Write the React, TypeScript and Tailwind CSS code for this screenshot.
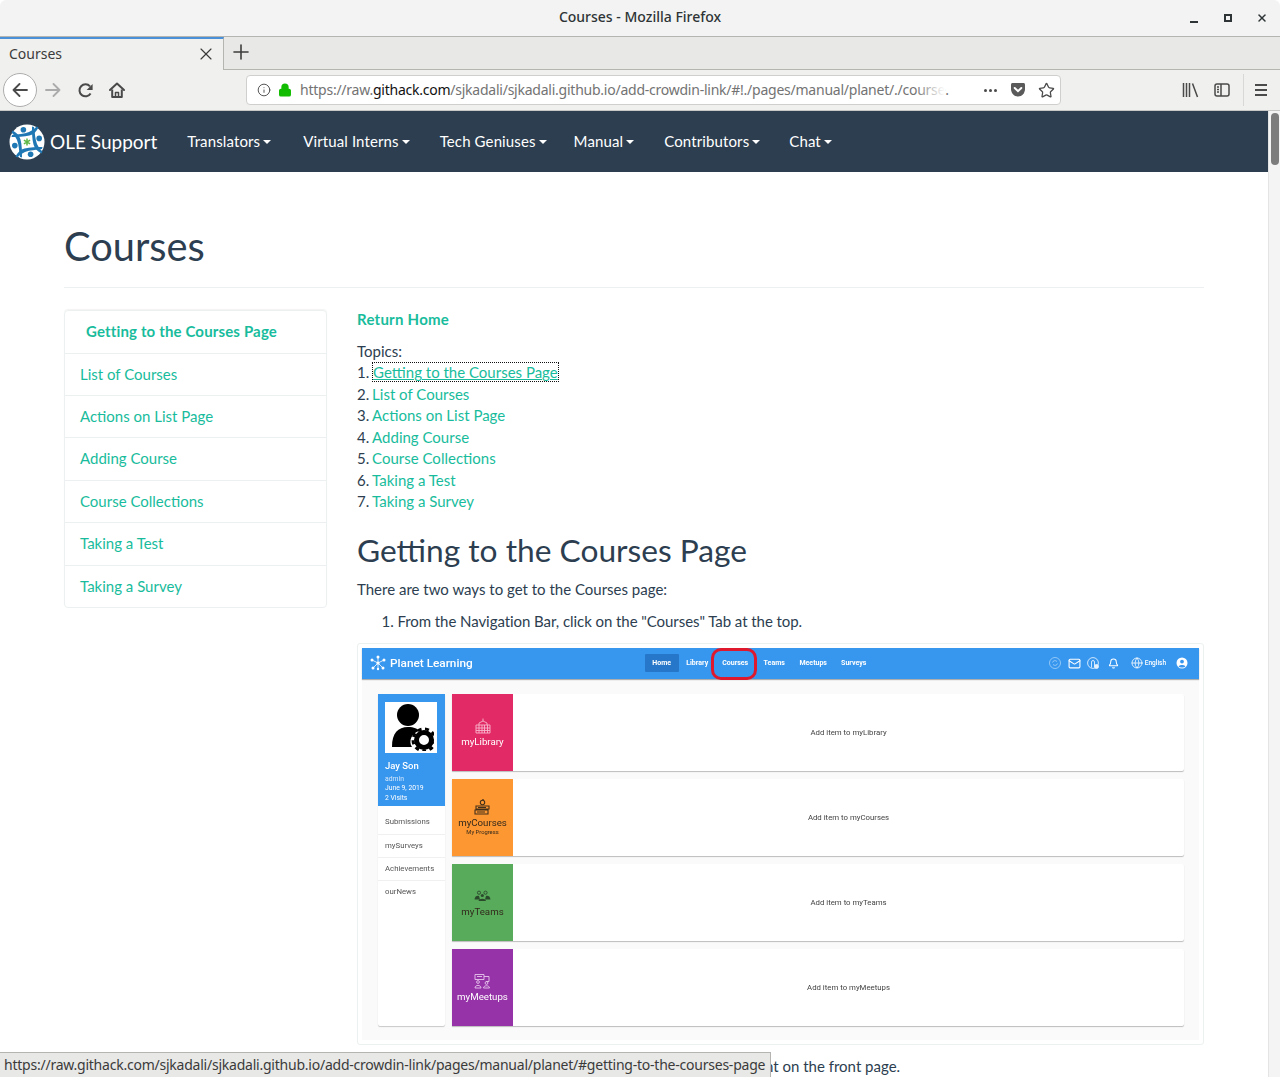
import React from 'react';
import { Info, Lock, Star, X, Plus, Bell, Mail, Globe } from 'lucide-react';

const topics = [
  'Getting to the Courses Page',
  'List of Courses',
  'Actions on List Page',
  'Adding Course',
  'Course Collections',
  'Taking a Test',
  'Taking a Survey',
];

const navItems = [
  { label: 'Translators', gap: 'ml-0' },
  { label: 'Virtual Interns', gap: 'ml-[32px]' },
  { label: 'Tech Geniuses', gap: 'ml-[30px]' },
  { label: 'Manual', gap: 'ml-[27px]' },
  { label: 'Contributors', gap: 'ml-[30px]' },
  { label: 'Chat', gap: 'ml-[29px]' },
];

const OleLogo = () => (
  <svg width="36" height="36" viewBox="-18 -18 36 36">
    <circle r="17.5" fill="#fff" />
    {[0, 90, 180, 270].map((deg) => (
      <g key={deg} transform={`rotate(${deg})`} fill="#1f78b4">
        <circle cx="-3.6" cy="-12.2" r="2.8" />
        <path d="M-15 -7 C-9 -8 -3 -8 2 -10 C5 -11.5 8 -13.5 9.5 -15.5 L11.5 -14.5 C9.5 -10.5 6.5 -7.5 2.5 -6.5 C-3 -5 -10 -5 -15.5 -5Z" />
      </g>
    ))}
    <path d="M0 -3.6V3.6M-3.1 -1.8L3.1 1.8M3.1 -1.8L-3.1 1.8" stroke="#5fb846" strokeWidth="1.5" />
  </svg>
);

const Caret = () => (
  <span className="ml-[3px] inline-block border-x-[4px] border-t-[4px] border-x-transparent border-t-white align-middle" />
);

const LibraryGlyph = () => (
  <svg width="18" height="16" viewBox="0 0 18 16" fill="none" stroke="#f7b5cc" strokeWidth="0.9">
    <path d="M9 0.5V3M5 5L9 3L13 5M2 7H16V15H2ZM5 5V7M13 5V7M2 10H16M2 12.5H16M5 7V15M8 7V15M10.5 7V15M13.5 7V15" />
  </svg>
);

const CoursesGlyph = () => (
  <svg width="17" height="16" viewBox="0 0 17 16" fill="none" stroke="#43301a" strokeWidth="1.1">
    <circle cx="8.5" cy="3.5" r="2.2" />
    <path d="M8.5 1.2L9.5 0M2 7H15V10H2ZM1 11H14V15H1ZM4 8.5H12M3 13H11" />
  </svg>
);

const TeamsGlyph = () => (
  <svg width="17" height="16" viewBox="0 0 17 11" fill="#2b4a2c">
    <circle cx="5" cy="2.2" r="1.6" fill="none" stroke="#2b4a2c" strokeWidth="0.9" />
    <circle cx="11.5" cy="2.2" r="1.6" fill="none" stroke="#2b4a2c" strokeWidth="0.9" />
    <circle cx="8.3" cy="5" r="1.6" />
    <path d="M0.5 9 C1 5.5 3 5 5 5.5 L6 9Z M16.5 9 C16 5.5 14 5 12 5.5 L11 9Z M4.5 10.5 C5 7.5 11.5 7.5 12 10.5Z" />
  </svg>
);

const MeetupsGlyph = () => (
  <svg width="17" height="16" viewBox="0 0 17 15" fill="none" stroke="#e6c6ec" strokeWidth="0.9">
    <path d="M1 1H10V6H1ZM3 3H8M10 3H15V8H12" />
    <circle cx="4" cy="8.5" r="1.4" />
    <circle cx="12.5" cy="9.5" r="1.4" />
    <path d="M1 14.5 C1 11 7 11 7 14.5ZM9.5 14.5 C9.5 11.5 15.5 11.5 15.5 14.5Z" />
  </svg>
);

const HomeTile = ({ label, sub, bg, dark, icon, note }: { label: string; sub?: string; bg: string; dark?: boolean; icon: React.ReactNode; note: string }) => (
  <div className="flex h-[77px] rounded-r-[2px] bg-white shadow-[0_1px_1px_rgba(0,0,0,0.25)]">
    <div className={`flex w-[61px] shrink-0 flex-col items-center justify-center pt-[1px] ${bg} ${dark ? 'text-[#33291c]' : 'text-white'}`}>
      <div className="mb-[2px] h-[16px]">{icon}</div>
      <div className="text-[9.7px] leading-[12px]">{label}</div>
      {sub && <div className="text-[5.8px] leading-[7px]">{sub}</div>}
    </div>
    <div className="flex flex-1 items-center justify-center pt-[2px] text-[7.8px] text-[#444]">{note}</div>
  </div>
);

const PlanetShot = () => (
  <div className="mb-[10px] rounded-[3px] border border-[#ecf0f1] p-[4px]">
    <div className="relative h-[392px] bg-[#fafafa] font-['Roboto',sans-serif] blur-[0.3px]">
      <div className="flex h-[31px] items-center bg-[#3796ee] text-white shadow-[0_1px_1px_rgba(0,0,0,0.3)]">
        <svg width="18" height="16" viewBox="0 0 18 16" className="ml-[7px]" fill="#fff">
          <path d="M9 8L9 2M9 8L3 5M9 8L15 5M9 8L4 13M9 8L14 13M9 8V14" stroke="#fff" strokeWidth="0.8" />
          <circle cx="9" cy="2" r="1.5" /><circle cx="3" cy="5" r="1.5" /><circle cx="15" cy="5" r="1.5" />
          <circle cx="4" cy="13" r="1.5" /><circle cx="14" cy="13" r="1.5" /><circle cx="9" cy="8" r="1.6" /><circle cx="9" cy="14" r="1.2" />
        </svg>
        <span className="ml-[3px] mt-[1px] text-[11.8px] font-medium leading-none">Planet Learning</span>
        <div className="ml-[172px] flex items-center text-[7px] font-bold">
          <span className="flex h-[18px] w-[34px] items-center justify-center rounded-[1px] bg-[#2677c9] pt-[1px]">Home</span>
          <span className="ml-[7px] mt-[1px] w-[23px] text-center">Library</span>
          <span className="ml-[13.5px] mt-[1px] w-[26px] text-center">Courses</span>
          <span className="ml-[15px] mt-[1px] w-[22px] text-center">Teams</span>
          <span className="ml-[14px] mt-[1px] w-[28px] text-center">Meetups</span>
          <span className="ml-[13.5px] mt-[1px] w-[26px] text-center">Surveys</span>
        </div>
        <div className="ml-auto mr-[11px] flex items-center">
          <svg width="12" height="12" viewBox="0 0 12 12" fill="none" stroke="#a9d3f8" strokeWidth="0.8">
            <circle cx="6" cy="6" r="5.5" />
            <path d="M3.5 5.5C4 3.5 6.5 3 8 4.5M8.5 6.5C8 8.5 5.5 9 4 7.5" />
          </svg>
          <Mail size={13} strokeWidth={2} className="ml-[7px]" />
          <svg width="12" height="12" viewBox="0 0 12 12" fill="none" stroke="#e3f0fd" strokeWidth="0.9" className="ml-[6px]">
            <circle cx="6" cy="6" r="5.4" />
            <path d="M4.5 10.5V5a1.5 1.5 0 0 1 3 0v5" />
            <circle cx="9.5" cy="9.5" r="2" fill="#e3f0fd" />
          </svg>
          <Bell size={11} strokeWidth={2.2} className="ml-[9px]" />
          <Globe size={12} strokeWidth={1.6} className="ml-[12px]" />
          <span className="ml-[2px] mt-[1px] text-[6.5px] font-medium">English</span>
          <svg width="12" height="12" viewBox="0 0 12 12" className="ml-[10px]">
            <circle cx="6" cy="6" r="5.5" fill="#fff" />
            <circle cx="6" cy="4.6" r="1.9" fill="#3796ee" />
            <path d="M2.6 9.4C3.4 7.4 8.6 7.4 9.4 9.4C8 10.8 4 10.8 2.6 9.4Z" fill="#3796ee" />
          </svg>
        </div>
      </div>
      {/* red marker drawn over the screenshot's Courses tab */}
      <div className="absolute left-[349px] top-0 h-[32px] w-[46px] rounded-[10px] border-[3px] border-[#e0182d]" />
      <div className="flex gap-[7px] pl-[16px] pr-[15px] pt-[15px]">
        <div className="h-[332px] w-[67px] shrink-0 rounded-b-[2px] bg-white shadow-[0_1px_1px_rgba(0,0,0,0.2)]">
          <div className="h-[112px] bg-[#3796ee] px-[7px] pt-[8px] text-white">
            <div className="flex h-[51px] w-[52px] items-center justify-center bg-white">
              <svg width="46" height="48" viewBox="0 0 46 48" fill="#000">
                <circle cx="20" cy="12" r="11" />
                <path d="M4 44 C4 30 10 24 20 24 C26 24 30 26 31 28 C24 30 20 38 24 44Z" />
                <circle cx="36" cy="37" r="7.5" fill="none" stroke="#000" strokeWidth="5" />
                <circle cx="36" cy="37" r="11" fill="none" stroke="#000" strokeWidth="3" strokeDasharray="4 3.5" />
              </svg>
            </div>
            <div className="mt-[7px] text-[9.5px] font-medium leading-[11px]">Jay Son</div>
            <div className="mt-[4px] text-[6.8px] leading-[9.5px] text-[#d5e8fb]">admin</div>
            <div className="text-[6.8px] leading-[9.5px]">June 9, 2019</div>
            <div className="text-[6.8px] leading-[9.5px]">2 Visits</div>
          </div>
          <div className="text-[7.8px] text-[#555]">
            <div className="flex h-[29px] items-center border-b border-[#f0f0f0] pl-[7px] pt-[4px]">Submissions</div>
            <div className="flex h-[23px] items-center border-b border-[#f0f0f0] pl-[7px] pt-[1px]">mySurveys</div>
            <div className="flex h-[23px] items-center border-b border-[#f0f0f0] pl-[7px]">Achievements</div>
            <div className="flex h-[23px] items-center pl-[7px]">ourNews</div>
          </div>
        </div>
        <div className="flex flex-1 flex-col gap-[8px]">
          <HomeTile label="myLibrary" bg="bg-[#e22a66]" note="Add item to myLibrary" icon={<LibraryGlyph />} />
          <HomeTile label="myCourses" sub="My Progress" bg="bg-[#fd9731]" dark note="Add item to myCourses" icon={<CoursesGlyph />} />
          <HomeTile label="myTeams" bg="bg-[#58ab5b]" dark note="Add item to myTeams" icon={<TeamsGlyph />} />
          <HomeTile label="myMeetups" bg="bg-[#9633a8]" note="Add item to myMeetups" icon={<MeetupsGlyph />} />
        </div>
      </div>
    </div>
  </div>
);

export default function App() {
  return (
    <div className="relative flex h-[1077px] flex-col overflow-hidden bg-white font-['Lato',sans-serif]">
      {/* window title */}
      <div className="relative flex h-[37px] shrink-0 items-center justify-center rounded-t-[6px] border-b border-[#b4b4b0] bg-[#f3f3f3] pb-[3px] font-['Noto_Sans',sans-serif] text-[14px] font-medium text-[#2e3436]">
        Courses - Mozilla Firefox
        <div className="absolute right-0 top-0 flex h-full items-center text-[#2e3436]">
          <span className="mr-[26px] mt-[7px] h-[2px] w-[8px] bg-[#2e3436]" />
          <span className="mr-[24px] h-[8px] w-[8px] border-2 border-[#2e3436]" />
          <X size={12} strokeWidth={3} className="mr-[12px]" />
        </div>
      </div>
      {/* tab strip */}
      <div className="flex h-[33px] shrink-0 border-b border-[#b4b4b0] bg-[#e8e8e6] font-['Noto_Sans',sans-serif]">
        <div className="flex h-[33px] w-[224px] items-center border-r border-t-2 border-[#b4b4b0] border-t-[#4a90d9] bg-[#f0f0ee] pb-[2px] pl-[9px] pr-[7px] text-[14px] text-[#3b3b3b]">
          <span className="flex-1">Courses</span>
          <X size={20} strokeWidth={1.4} />
        </div>
        <Plus size={24} strokeWidth={1.6} className="ml-[5px] mt-[3px] text-[#3d3d3d]" />
      </div>
      {/* toolbar */}
      <div className="flex h-[41px] shrink-0 items-center border-b border-[#c8c8c6] bg-[#f0f0ee] text-[#4a4a4a]">
        <div className="ml-[3px] flex h-[34px] w-[34px] items-center justify-center rounded-full border border-[#adadad] bg-white">
          <svg width="16" height="14" viewBox="0 0 16 14" fill="none" stroke="#4a4a4a" strokeWidth="1.8" strokeLinecap="round" strokeLinejoin="round">
            <path d="M15 7H1.5M7.5 1L1.5 7L7.5 13" />
          </svg>
        </div>
        <svg width="16" height="14" viewBox="0 0 16 14" className="ml-[8px]" fill="none" stroke="#ababab" strokeWidth="1.8" strokeLinecap="round" strokeLinejoin="round">
          <path d="M1 7H14.5M8.5 1L14.5 7L8.5 13" />
        </svg>
        <svg width="15" height="15" viewBox="0 0 15 15" className="ml-[17px]" fill="none" stroke="#4a4a4a" strokeWidth="2">
          <path d="M12.6 10.5A6 6 0 1 1 12 3.4" />
          <path d="M14.6 1V7H8.6Z" fill="#4a4a4a" stroke="none" />
        </svg>
        <svg width="16" height="16" viewBox="0 0 16 16" className="ml-[16px]" fill="none" stroke="#4a4a4a" strokeWidth="2" strokeLinejoin="round">
          <path d="M1 8L8 1.5L15 8" strokeLinecap="round" />
          <path d="M3.2 7.5V15H12.8V7.5" />
          <path d="M6.5 15V10.5H9.5V15" strokeWidth="1.5" />
        </svg>
        <div className="relative ml-[121px] flex h-[30px] w-[815px] items-center rounded-[4px] border border-[#cfcfcd] bg-white font-['Noto_Sans',sans-serif] text-[14px] tracking-[-0.24px]">
          <Info size={14} strokeWidth={1.6} className="ml-[10px]" />
          <Lock size={14} strokeWidth={2.5} className="ml-[7px] text-[#12bc00]" fill="#12bc00" />
          <div className="ml-[8px] whitespace-nowrap pb-[2px] text-[#737373]">
            https://raw.<span className="text-[#111]">githack.com</span>/sjkadali/sjkadali.github.io/add-crowdin-link/#!./pages/manual/planet/./course.
          </div>
          <div className="absolute left-[668px] top-0 h-full w-[30px] bg-gradient-to-r from-transparent to-white" />
          <span className="ml-auto flex items-center">
            <span className="mr-[13px] flex gap-[2px]">
              <i className="h-[3px] w-[3px] rounded-full bg-[#4a4a4a]" />
              <i className="h-[3px] w-[3px] rounded-full bg-[#4a4a4a]" />
              <i className="h-[3px] w-[3px] rounded-full bg-[#4a4a4a]" />
            </span>
            <svg width="16" height="16" viewBox="0 0 16 16" className="mr-[12px]">
              <path d="M1 2.5 C1 1.7 1.7 1 2.5 1 H13.5 C14.3 1 15 1.7 15 2.5 V7 C15 11 12 14.5 8 14.5 C4 14.5 1 11 1 7Z" fill="#5a5a5a" />
              <path d="M4.7 6 L8 9.2 L11.3 6" fill="none" stroke="#fff" strokeWidth="2" strokeLinecap="round" />
            </svg>
            <Star size={17} strokeWidth={1.8} className="mr-[5px]" />
          </span>
        </div>
        <svg width="17" height="16" viewBox="0 0 17 16" className="ml-[121px]" fill="none" stroke="#4a4a4a" strokeWidth="1.5">
          <path d="M1.5 1v14M4.5 1v14M7.5 1v14M10.5 1.5l5 13.5" />
        </svg>
        <svg width="16" height="14" viewBox="0 0 16 14" className="ml-[15px]" fill="none" stroke="#4a4a4a" strokeWidth="1.5">
          <rect x="1" y="1" width="14" height="12" rx="2" />
          <path d="M7 1v12M3 4h2M3 6.5h2M3 9h2" />
        </svg>
        <span className="ml-[13px] h-[32px] w-px bg-[#d8d8d6]" />
        <div className="ml-[11px] flex w-[12px] flex-col gap-[3px]">
          <span className="h-[2px] bg-[#4a4a4a]" />
          <span className="h-[2px] bg-[#4a4a4a]" />
          <span className="h-[2px] bg-[#4a4a4a]" />
        </div>
      </div>

      <div className="flex min-h-0 flex-1">
        <div className="min-w-0 flex-1">
          {/* site navbar */}
          <nav className="flex h-[61px] items-center bg-[#2c3e50] text-white">
            <div className="ml-[9px]"><OleLogo /></div>
            <span className="ml-[5px] text-[19px] leading-none">OLE Support</span>
            <div className="ml-[30px] flex text-[15px] tracking-[0.12px]">
              {navItems.map((item) => (
                <span key={item.label} className={`flex items-center ${item.gap}`}>{item.label}<Caret /></span>
              ))}
            </div>
          </nav>

          <div className="px-[64px] text-[15px] leading-[21.43px] text-[#2c3e50]">
            <h1 className="mt-[52px] border-b border-[#ecf0f1] pb-[20px] text-[39.8px] leading-[43px]">Courses</h1>

            <div className="mt-[21px] flex">
              <div className="mt-[1px] w-[263px] shrink-0">
                <div className="rounded-[4px] border border-[#ecf0f1] shadow-[0_-1px_1px_rgba(0,0,0,0.05)]">
                  {topics.map((t, i) => (
                    <div
                      key={t}
                      className={`py-[10px] pl-[15px] text-[#18bc9c] ${i > 0 ? 'h-[42.43px] border-t border-[#ecf0f1]' : 'h-[41.6px] pl-[21px] font-bold tracking-[0.15px]'}`}
                    >
                      {t}
                    </div>
                  ))}
                </div>
              </div>

              <div className="ml-[30px] min-w-0 flex-1">
                <p className="font-bold tracking-[0.25px] text-[#18bc9c]">Return Home</p>
                <div className="mt-[10.5px]">Topics:</div>
                {topics.map((t, i) => (
                  <div key={t}>
                    {i + 1}.{' '}
                    <span className={`text-[#18bc9c] ${i === 0 ? 'underline outline outline-1 outline-dotted outline-[#111]' : '-ml-px'}`}>{t}</span>
                  </div>
                ))}
                <h2 className="mb-[10.5px] mt-[21px] text-[31.7px] leading-[35.2px]">Getting to the Courses Page</h2>
                <p className="mb-[10.5px]">There are two ways to get to the Courses page:</p>
                <div className="pl-[24.5px] tracking-[-0.06px]">1. From the Navigation Bar, click on the "Courses" Tab at the top.</div>
                <div className="mt-[10px]"><PlanetShot /></div>
                {/* the start of this line sits behind the status overlay */}
                <div className="whitespace-nowrap pl-[408px] pt-[1px]">ht on the front page.</div>
              </div>
            </div>
          </div>
        </div>
        {/* page scrollbar */}
        <div className="w-[12px] shrink-0 border-l border-[#e4e4e4] bg-[#f4f4f4] pl-[2px] pt-[2px]">
          <div className="h-[52px] w-[8px] rounded-full bg-[#7d7d7d]" />
        </div>
      </div>

      {/* link status overlay */}
      <div className="absolute bottom-0 left-0 flex h-[25px] w-[771px] items-center whitespace-nowrap border-r border-t border-[#b4b4b0] bg-[#e8e8e6] pb-[2px] pl-[4px] font-['Noto_Sans',sans-serif] text-[14px] tracking-[-0.23px] text-[#3b3b3b]">
        https://raw.githack.com/sjkadali/sjkadali.github.io/add-crowdin-link/pages/manual/planet/#getting-to-the-courses-page
      </div>
    </div>
  );
}
